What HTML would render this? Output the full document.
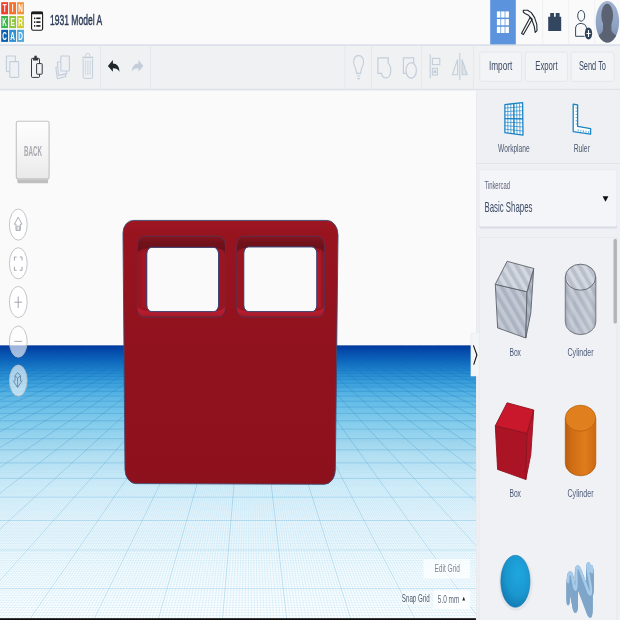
<!DOCTYPE html>
<html><head><meta charset="utf-8"><title>1931 Model A</title>
<style>
html,body{margin:0;padding:0;background:#fafafa;}
body{width:620px;height:620px;overflow:hidden;position:relative;font-family:"Liberation Sans",sans-serif;}
</style></head><body>
<svg width="620" height="620" viewBox="0 0 620 620" font-family="Liberation Sans, sans-serif" style="position:absolute;left:0;top:0;display:block;will-change:transform">
<rect x="0" y="0" width="620" height="620" fill="#fafafa"/>
<defs>
<linearGradient id="gnd" x1="0" y1="345" x2="0" y2="620" gradientUnits="userSpaceOnUse">
<stop offset="0.0000" stop-color="#002e98"/>
<stop offset="0.0109" stop-color="#003ca4"/>
<stop offset="0.0255" stop-color="#044cae"/>
<stop offset="0.0509" stop-color="#0a62bc"/>
<stop offset="0.0873" stop-color="#1a7fcc"/>
<stop offset="0.1225" stop-color="#3098d8"/>
<stop offset="0.1564" stop-color="#4aace2"/>
<stop offset="0.1927" stop-color="#64bce8"/>
<stop offset="0.2364" stop-color="#78c7eb"/>
<stop offset="0.2909" stop-color="#92d3ef"/>
<stop offset="0.3455" stop-color="#aadcf2"/>
<stop offset="0.4000" stop-color="#c2e7f6"/>
<stop offset="0.4727" stop-color="#d8f0fa"/>
<stop offset="0.5491" stop-color="#e8f7fd"/>
<stop offset="0.6400" stop-color="#f2fafe"/>
<stop offset="0.8000" stop-color="#fbfeff"/>
<stop offset="1.0000" stop-color="#ffffff"/>
</linearGradient>
<linearGradient id="fmin" x1="0" y1="360" x2="0" y2="560" gradientUnits="userSpaceOnUse"><stop offset="0" stop-color="#3fa0d8" stop-opacity="0"/><stop offset="0.28" stop-color="#4fb0e0" stop-opacity="0.2"/><stop offset="0.32" stop-color="#4fb0e0" stop-opacity="0.13"/><stop offset="1" stop-color="#5dbbe4" stop-opacity="0.3"/></linearGradient>
<linearGradient id="fmaj" x1="0" y1="345" x2="0" y2="620" gradientUnits="userSpaceOnUse"><stop offset="0" stop-color="#0c4f9e" stop-opacity="0.25"/><stop offset="0.15" stop-color="#1f7cc0" stop-opacity="0.5"/><stop offset="0.5" stop-color="#3f9fd0" stop-opacity="0.48"/><stop offset="1" stop-color="#57aed8" stop-opacity="0.48"/></linearGradient>
<clipPath id="gclip"><rect x="0" y="345.4" width="476" height="273"/></clipPath>
</defs>
<rect x="0" y="345.4" width="476" height="273" fill="url(#gnd)"/>
<g clip-path="url(#gclip)" fill="none">
<path d="M2.6 362.0L-2.0 363.1M3.8 362.0L-2.0 363.5M5.1 362.0L-2.0 363.8M6.3 362.0L-2.0 364.1M8.8 362.0L-2.0 364.8M10.1 362.0L-2.0 365.1M11.3 362.0L-2.0 365.5M12.6 362.0L-2.0 365.8M13.8 362.0L-2.0 366.2M15.1 362.0L-2.0 366.5M16.3 362.0L-2.0 366.9M17.6 362.0L-2.0 367.2M18.8 362.0L-2.0 367.6M21.3 362.0L-2.0 368.3M22.5 362.0L-2.0 368.7M23.8 362.0L-2.0 369.1M25.0 362.0L-2.0 369.5M26.3 362.0L-2.0 369.8M27.5 362.0L-2.0 370.2M28.8 362.0L-2.0 370.6M30.0 362.0L-2.0 371.0M31.3 362.0L-2.0 371.4M33.8 362.0L-2.0 372.3M35.0 362.0L-2.0 372.7M36.3 362.0L-2.0 373.1M37.5 362.0L-2.0 373.5M38.8 362.0L-2.0 374.0M40.0 362.0L-2.0 374.4M41.3 362.0L-2.0 374.9M42.5 362.0L-2.0 375.3M43.8 362.0L-2.0 375.8M46.3 362.0L-2.0 376.7M47.5 362.0L-2.0 377.2M48.8 362.0L-2.0 377.6M50.0 362.0L-2.0 378.1M51.2 362.0L-2.0 378.6M52.5 362.0L-2.0 379.1M53.7 362.0L-2.0 379.6M55.0 362.0L-2.0 380.1M56.2 362.0L-2.0 380.6M58.7 362.0L-2.0 381.7M60.0 362.0L-2.0 382.2M61.2 362.0L-2.0 382.8M62.5 362.0L-2.0 383.3M63.7 362.0L-2.0 383.9M65.0 362.0L-2.0 384.4M66.2 362.0L-2.0 385.0M67.5 362.0L-2.0 385.6M68.7 362.0L-2.0 386.2M71.2 362.0L-2.0 387.4M72.5 362.0L-2.0 388.0M73.7 362.0L-2.0 388.6M75.0 362.0L-2.0 389.3M76.2 362.0L-2.0 389.9M77.5 362.0L-2.0 390.5M78.7 362.0L-2.0 391.2M79.9 362.0L-2.0 391.9M81.2 362.0L-2.0 392.6M83.7 362.0L-2.0 393.9M84.9 362.0L-2.0 394.7M86.2 362.0L-2.0 395.4M87.4 362.0L-2.0 396.1M88.7 362.0L-2.0 396.9M89.9 362.0L-2.0 397.6M91.2 362.0L-2.0 398.4M92.4 362.0L-2.0 399.2M93.7 362.0L-2.0 399.9M96.2 362.0L-2.0 401.6M97.4 362.0L-2.0 402.4M98.7 362.0L-2.0 403.2M99.9 362.0L-2.0 404.1M101.2 362.0L-2.0 405.0M102.4 362.0L-2.0 405.9M103.7 362.0L-2.0 406.8M104.9 362.0L-2.0 407.7M106.2 362.0L-2.0 408.6M108.6 362.0L-2.0 410.5M109.9 362.0L-2.0 411.5M111.1 362.0L-2.0 412.5M112.4 362.0L-2.0 413.5M113.6 362.0L-2.0 414.6M114.9 362.0L-2.0 415.6M116.1 362.0L-2.0 416.7M117.4 362.0L-2.0 417.8M118.6 362.0L-2.0 418.9M121.1 362.0L-2.0 421.2M1.8 420.0L-2.0 421.8M122.4 362.0L-2.0 422.4M4.2 420.0L-2.0 423.0M123.6 362.0L-2.0 423.6M6.6 420.0L-2.0 424.2M124.9 362.0L-2.0 424.9M9.0 420.0L-2.0 425.5M126.1 362.0L-2.0 426.1M11.4 420.0L-2.0 426.8M127.4 362.0L-2.0 427.4M13.8 420.0L-2.0 428.1M128.6 362.0L-2.0 428.7M16.3 420.0L-2.0 429.4M129.9 362.0L-2.0 430.0M18.7 420.0L-2.0 430.7M131.1 362.0L-2.0 431.4M21.1 420.0L-2.0 432.1M23.5 420.0L-2.0 433.5M133.6 362.0L-2.0 434.2M25.9 420.0L-2.0 435.0M134.9 362.0L-2.0 435.7M28.3 420.0L-2.0 436.4M136.1 362.0L-2.0 437.2M30.8 420.0L-2.0 437.9M137.3 362.0L-2.0 438.7M33.2 420.0L-2.0 439.5M138.6 362.0L-2.0 440.2M35.6 420.0L-2.0 441.0M139.8 362.0L-2.0 441.8M38.0 420.0L-2.0 442.6M141.1 362.0L-2.0 443.5M40.4 420.0L-2.0 444.3M142.3 362.0L-2.0 445.1M42.8 420.0L-2.0 446.0M143.6 362.0L-2.0 446.8M45.2 420.0L-2.0 447.7M47.7 420.0L-2.0 449.5M146.1 362.0L-2.0 450.3M50.1 420.0L-2.0 451.3M147.3 362.0L-2.0 452.2M52.5 420.0L-2.0 453.1M148.6 362.0L-2.0 454.0M54.9 420.0L-2.0 455.0M149.8 362.0L-2.0 456.0M57.3 420.0L-2.0 456.9M151.1 362.0L-2.0 457.9M59.7 420.0L-2.0 458.9M152.3 362.0L-2.0 460.0M62.2 420.0L-2.0 461.0M153.6 362.0L-2.0 462.0M64.6 420.0L-2.0 463.1M154.8 362.0L-2.0 464.1M67.0 420.0L-2.0 465.2M156.1 362.0L-2.0 466.3M69.4 420.0L-2.0 467.4M71.8 420.0L-2.0 469.7M158.6 362.0L-2.0 470.9M74.2 420.0L-2.0 472.0M159.8 362.0L-2.0 473.2M76.6 420.0L-2.0 474.4M161.1 362.0L-2.0 475.7M79.1 420.0L-2.0 476.9M162.3 362.0L-2.0 478.2M81.5 420.0L-2.0 479.4M163.6 362.0L-2.0 480.7M83.9 420.0L-2.0 482.0M164.8 362.0L-2.0 483.4M86.3 420.0L-2.0 484.7M166.0 362.0L-2.0 486.1M88.7 420.0L-2.0 487.5M167.3 362.0L-2.0 488.9M91.1 420.0L-2.0 490.3M168.5 362.0L-2.0 491.8M93.5 420.0L-2.0 493.3M96.0 420.0L-2.0 496.3M171.0 362.0L-2.0 497.9M98.4 420.0L-2.0 499.4M172.3 362.0L-2.0 501.0M100.8 420.0L-2.0 502.7M173.5 362.0L-2.0 504.3M103.2 420.0L-2.0 506.0M174.8 362.0L-2.0 507.7M105.6 420.0L-2.0 509.5M176.0 362.0L-2.0 511.2M108.0 420.0L-2.0 513.0M177.3 362.0L-2.0 514.8M110.5 420.0L-2.0 516.7M178.5 362.0L-2.0 518.6M112.9 420.0L-2.0 520.5M179.8 362.0L-2.0 522.5M115.3 420.0L-2.0 524.5M181.0 362.0L-2.0 526.5M117.7 420.0L-2.0 528.6M120.1 420.0L-2.0 532.8M183.5 362.0L-2.0 535.0M122.5 420.0L-2.0 537.2M184.8 362.0L-2.0 539.5M124.9 420.0L-2.0 541.8M186.0 362.0L-2.0 544.2M127.4 420.0L-2.0 546.6M187.3 362.0L-2.0 549.0M129.8 420.0L-2.0 551.5M188.5 362.0L-2.0 554.1M132.2 420.0L-2.0 556.7M189.8 362.0L-2.0 559.3M134.6 420.0L-2.0 562.1M191.0 362.0L-2.0 564.8M137.0 420.0L-2.0 567.7M192.3 362.0L-2.0 570.5M139.4 420.0L-2.0 573.5M193.5 362.0L-2.0 576.5M141.8 420.0L-2.0 579.6M144.3 420.0L-2.0 586.0M196.0 362.0L-2.0 589.3M146.7 420.0L-2.0 592.7M197.2 362.0L-2.0 596.1M149.1 420.0L-2.0 599.7M198.5 362.0L-2.0 603.3M151.5 420.0L-2.0 607.0M199.7 362.0L-2.0 610.8M153.9 420.0L-2.0 614.8M201.0 362.0L-2.0 618.8M156.3 420.0L0.2 620.0M202.2 362.0L3.5 620.0M158.8 420.0L6.7 620.0M203.5 362.0L9.9 620.0M161.2 420.0L13.1 620.0M204.7 362.0L16.3 620.0M163.6 420.0L19.6 620.0M206.0 362.0L22.8 620.0M166.0 420.0L26.0 620.0M168.4 420.0L32.4 620.0M208.5 362.0L35.7 620.0M170.8 420.0L38.9 620.0M209.7 362.0L42.1 620.0M173.2 420.0L45.3 620.0M211.0 362.0L48.5 620.0M175.7 420.0L51.8 620.0M212.2 362.0L55.0 620.0M178.1 420.0L58.2 620.0M213.5 362.0L61.4 620.0M180.5 420.0L64.6 620.0M214.7 362.0L67.9 620.0M182.9 420.0L71.1 620.0M216.0 362.0L74.3 620.0M185.3 420.0L77.5 620.0M217.2 362.0L80.7 620.0M187.7 420.0L84.0 620.0M218.5 362.0L87.2 620.0M190.2 420.0L90.4 620.0M192.6 420.0L96.8 620.0M220.9 362.0L100.1 620.0M195.0 420.0L103.3 620.0M222.2 362.0L106.5 620.0M197.4 420.0L109.7 620.0M223.4 362.0L112.9 620.0M199.8 420.0L116.2 620.0M224.7 362.0L119.4 620.0M202.2 420.0L122.6 620.0M225.9 362.0L125.8 620.0M204.6 420.0L129.0 620.0M227.2 362.0L132.3 620.0M207.1 420.0L135.5 620.0M228.4 362.0L138.7 620.0M209.5 420.0L141.9 620.0M229.7 362.0L145.1 620.0M211.9 420.0L148.4 620.0M230.9 362.0L151.6 620.0M214.3 420.0L154.8 620.0M216.7 420.0L161.2 620.0M233.4 362.0L164.5 620.0M219.1 420.0L167.7 620.0M234.7 362.0L170.9 620.0M221.5 420.0L174.1 620.0M235.9 362.0L177.3 620.0M224.0 420.0L180.6 620.0M237.2 362.0L183.8 620.0M226.4 420.0L187.0 620.0M238.4 362.0L190.2 620.0M228.8 420.0L193.4 620.0M239.7 362.0L196.7 620.0M231.2 420.0L199.9 620.0M240.9 362.0L203.1 620.0M233.6 420.0L206.3 620.0M242.2 362.0L209.5 620.0M236.0 420.0L212.8 620.0M243.4 362.0L216.0 620.0M238.5 420.0L219.2 620.0M240.9 420.0L225.6 620.0M245.9 362.0L228.9 620.0M243.3 420.0L232.1 620.0M247.2 362.0L235.3 620.0M245.7 420.0L238.5 620.0M248.4 362.0L241.7 620.0M248.1 420.0L245.0 620.0M249.6 362.0L248.2 620.0M250.5 420.0L251.4 620.0M250.9 362.0L254.6 620.0M252.9 420.0L257.8 620.0M252.1 362.0L261.1 620.0M255.4 420.0L264.3 620.0M253.4 362.0L267.5 620.0M257.8 420.0L270.7 620.0M254.6 362.0L273.9 620.0M260.2 420.0L277.2 620.0M255.9 362.0L280.4 620.0M262.6 420.0L283.6 620.0M265.0 420.0L290.1 620.0M258.4 362.0L293.3 620.0M267.4 420.0L296.5 620.0M259.6 362.0L299.7 620.0M269.8 420.0L302.9 620.0M260.9 362.0L306.2 620.0M272.3 420.0L309.4 620.0M262.1 362.0L312.6 620.0M274.7 420.0L315.8 620.0M263.4 362.0L319.0 620.0M277.1 420.0L322.3 620.0M264.6 362.0L325.5 620.0M279.5 420.0L328.7 620.0M265.9 362.0L331.9 620.0M281.9 420.0L335.1 620.0M267.1 362.0L338.4 620.0M284.3 420.0L341.6 620.0M268.4 362.0L344.8 620.0M286.8 420.0L348.0 620.0M289.2 420.0L354.5 620.0M270.9 362.0L357.7 620.0M291.6 420.0L360.9 620.0M272.1 362.0L364.1 620.0M294.0 420.0L367.3 620.0M273.4 362.0L370.6 620.0M296.4 420.0L373.8 620.0M274.6 362.0L377.0 620.0M298.8 420.0L380.2 620.0M275.9 362.0L383.4 620.0M301.2 420.0L386.7 620.0M277.1 362.0L389.9 620.0M303.7 420.0L393.1 620.0M278.3 362.0L396.3 620.0M306.1 420.0L399.5 620.0M279.6 362.0L402.8 620.0M308.5 420.0L406.0 620.0M280.8 362.0L409.2 620.0M310.9 420.0L412.4 620.0M313.3 420.0L418.9 620.0M283.3 362.0L422.1 620.0M315.7 420.0L425.3 620.0M284.6 362.0L428.5 620.0M318.2 420.0L431.7 620.0M285.8 362.0L435.0 620.0M320.6 420.0L438.2 620.0M287.1 362.0L441.4 620.0M323.0 420.0L444.6 620.0M288.3 362.0L447.8 620.0M325.4 420.0L451.1 620.0M289.6 362.0L454.3 620.0M327.8 420.0L457.5 620.0M290.8 362.0L460.7 620.0M330.2 420.0L463.9 620.0M292.1 362.0L467.2 620.0M332.6 420.0L470.4 620.0M293.3 362.0L473.6 620.0M335.1 420.0L476.8 620.0M337.5 420.0L478.0 612.8M295.8 362.0L478.0 608.5M339.9 420.0L478.0 604.4M297.1 362.0L478.0 600.3M342.3 420.0L478.0 596.4M298.3 362.0L478.0 592.6M344.7 420.0L478.0 588.9M299.6 362.0L478.0 585.2M347.1 420.0L478.0 581.7M300.8 362.0L478.0 578.2M349.5 420.0L478.0 574.8M302.1 362.0L478.0 571.6M352.0 420.0L478.0 568.3M303.3 362.0L478.0 565.2M354.4 420.0L478.0 562.1M304.6 362.0L478.0 559.1M356.8 420.0L478.0 556.2M305.8 362.0L478.0 553.3M359.2 420.0L478.0 550.5M361.6 420.0L478.0 545.1M308.3 362.0L478.0 542.5M364.0 420.0L478.0 539.9M309.5 362.0L478.0 537.4M366.5 420.0L478.0 534.9M310.8 362.0L478.0 532.5M368.9 420.0L478.0 530.2M312.0 362.0L478.0 527.9M371.3 420.0L478.0 525.6M313.3 362.0L478.0 523.4M373.7 420.0L478.0 521.2M314.5 362.0L478.0 519.0M376.1 420.0L478.0 516.9M315.8 362.0L478.0 514.9M378.5 420.0L478.0 512.9M317.0 362.0L478.0 510.9M380.9 420.0L478.0 508.9M318.3 362.0L478.0 507.0M383.4 420.0L478.0 505.2M385.8 420.0L478.0 501.5M320.8 362.0L478.0 499.7M388.2 420.0L478.0 498.0M322.0 362.0L478.0 496.3M390.6 420.0L478.0 494.6M323.3 362.0L478.0 492.9M393.0 420.0L478.0 491.3M324.5 362.0L478.0 489.7M395.4 420.0L478.0 488.1M325.8 362.0L478.0 486.6M397.8 420.0L478.0 485.1M327.0 362.0L478.0 483.6M400.3 420.0L478.0 482.1M328.3 362.0L478.0 480.6M402.7 420.0L478.0 479.2M329.5 362.0L478.0 477.8M405.1 420.0L478.0 476.4M330.8 362.0L478.0 475.0M407.5 420.0L478.0 473.7M409.9 420.0L478.0 471.1M333.3 362.0L478.0 469.8M412.3 420.0L478.0 468.5M334.5 362.0L478.0 467.3M414.8 420.0L478.0 466.1M335.7 362.0L478.0 464.9M417.2 420.0L478.0 463.7M337.0 362.0L478.0 462.5M419.6 420.0L478.0 461.3M338.2 362.0L478.0 460.2M422.0 420.0L478.0 459.1M339.5 362.0L478.0 458.0M424.4 420.0L478.0 456.9M340.7 362.0L478.0 455.8M426.8 420.0L478.0 454.7M342.0 362.0L478.0 453.7M429.2 420.0L478.0 452.6M343.2 362.0L478.0 451.6M431.7 420.0L478.0 450.6M434.1 420.0L478.0 448.6M345.7 362.0L478.0 447.7M436.5 420.0L478.0 446.7M347.0 362.0L478.0 445.8M438.9 420.0L478.0 444.8M348.2 362.0L478.0 443.9M441.3 420.0L478.0 443.0M349.5 362.0L478.0 442.1M443.7 420.0L478.0 441.2M350.7 362.0L478.0 440.3M446.2 420.0L478.0 439.5M352.0 362.0L478.0 438.6M448.6 420.0L478.0 437.8M353.2 362.0L478.0 437.0M451.0 420.0L478.0 436.1M354.5 362.0L478.0 435.3M453.4 420.0L478.0 434.5M355.7 362.0L478.0 433.7M455.8 420.0L478.0 432.9M458.2 420.0L478.0 431.4M358.2 362.0L478.0 430.6M460.6 420.0L478.0 429.9M359.5 362.0L478.0 429.1M463.1 420.0L478.0 428.4M360.7 362.0L478.0 427.7M465.5 420.0L478.0 427.0M362.0 362.0L478.0 426.3M467.9 420.0L478.0 425.6M363.2 362.0L478.0 424.9M470.3 420.0L478.0 424.2M364.4 362.0L478.0 423.5M472.7 420.0L478.0 422.8M365.7 362.0L478.0 422.2M475.1 420.0L478.0 421.5M366.9 362.0L478.0 420.9M368.2 362.0L478.0 419.6M370.7 362.0L478.0 417.1M371.9 362.0L478.0 415.9M373.2 362.0L478.0 414.8M374.4 362.0L478.0 413.6M375.7 362.0L478.0 412.5M376.9 362.0L478.0 411.4M378.2 362.0L478.0 410.3M379.4 362.0L478.0 409.2M380.7 362.0L478.0 408.2M383.2 362.0L478.0 406.2M384.4 362.0L478.0 405.2M385.7 362.0L478.0 404.2M386.9 362.0L478.0 403.3M388.2 362.0L478.0 402.3M389.4 362.0L478.0 401.4M390.7 362.0L478.0 400.5M391.9 362.0L478.0 399.6M393.1 362.0L478.0 398.8M395.6 362.0L478.0 397.1M396.9 362.0L478.0 396.2M398.1 362.0L478.0 395.4M399.4 362.0L478.0 394.6M400.6 362.0L478.0 393.8M401.9 362.0L478.0 393.1M403.1 362.0L478.0 392.3M404.4 362.0L478.0 391.6M405.6 362.0L478.0 390.8M408.1 362.0L478.0 389.4M409.4 362.0L478.0 388.7M410.6 362.0L478.0 388.0M411.9 362.0L478.0 387.3M413.1 362.0L478.0 386.7M414.4 362.0L478.0 386.0M415.6 362.0L478.0 385.4M416.9 362.0L478.0 384.7M418.1 362.0L478.0 384.1M420.6 362.0L478.0 382.9M421.8 362.0L478.0 382.3M423.1 362.0L478.0 381.7M424.3 362.0L478.0 381.1M425.6 362.0L478.0 380.5M426.8 362.0L478.0 379.9M428.1 362.0L478.0 379.4M429.3 362.0L478.0 378.8M430.6 362.0L478.0 378.3M433.1 362.0L478.0 377.2M434.3 362.0L478.0 376.7M435.6 362.0L478.0 376.2M436.8 362.0L478.0 375.7M438.1 362.0L478.0 375.2M439.3 362.0L478.0 374.7M440.6 362.0L478.0 374.2M441.8 362.0L478.0 373.7M443.1 362.0L478.0 373.2M445.6 362.0L478.0 372.3M446.8 362.0L478.0 371.8M448.0 362.0L478.0 371.4M449.3 362.0L478.0 370.9M450.5 362.0L478.0 370.5M451.8 362.0L478.0 370.1M453.0 362.0L478.0 369.6M454.3 362.0L478.0 369.2M455.5 362.0L478.0 368.8M458.0 362.0L478.0 368.0M459.3 362.0L478.0 367.5M460.5 362.0L478.0 367.1M461.8 362.0L478.0 366.8M463.0 362.0L478.0 366.4M464.3 362.0L478.0 366.0M465.5 362.0L478.0 365.6M466.8 362.0L478.0 365.2M468.0 362.0L478.0 364.8M470.5 362.0L478.0 364.1M471.8 362.0L478.0 363.7M473.0 362.0L478.0 363.4M474.3 362.0L478.0 363.0" stroke="url(#fmin)" stroke-width="0.5"/>
<path d="M0 372.2H476M0 372.5H476M0 372.8H476M0 373.1H476M0 373.7H476M0 373.9H476M0 374.2H476M0 374.5H476M0 374.8H476M0 375.1H476M0 375.4H476M0 375.7H476M0 376.1H476M0 376.7H476M0 377.0H476M0 377.3H476M0 377.6H476M0 378.0H476M0 378.3H476M0 378.6H476M0 378.9H476M0 379.3H476M0 380.0H476M0 380.3H476M0 380.6H476M0 381.0H476M0 381.4H476M0 381.7H476M0 382.1H476M0 382.4H476M0 382.8H476M0 383.5H476M0 383.9H476M0 384.3H476M0 384.7H476M0 385.1H476M0 385.4H476M0 385.8H476M0 386.2H476M0 386.6H476M0 387.4H476M0 387.9H476M0 388.3H476M0 388.7H476M0 389.1H476M0 389.5H476M0 390.0H476M0 390.4H476M0 390.8H476M0 391.7H476M0 392.2H476M0 392.6H476M0 393.1H476M0 393.6H476M0 394.0H476M0 394.5H476M0 395.0H476" stroke="#58b8e2" stroke-width="0.5" opacity="0.07"/>
<path d="M0 395.5H476M0 396.5H476M0 397.0H476M0 397.5H476M0 398.0H476M0 398.5H476M0 399.0H476M0 399.5H476M0 400.1H476M0 400.6H476M0 401.7H476M0 402.3H476M0 402.8H476M0 403.4H476M0 404.0H476M0 404.6H476M0 405.1H476M0 405.7H476M0 406.3H476M0 407.6H476M0 408.2H476M0 408.8H476M0 409.5H476M0 410.1H476M0 410.8H476M0 411.4H476M0 412.1H476M0 412.8H476M0 414.1H476M0 414.8H476M0 415.5H476M0 416.3H476M0 417.0H476M0 417.7H476M0 418.5H476M0 419.2H476M0 420.0H476" stroke="#58b8e2" stroke-width="0.5" opacity="0.14"/>
<path d="M0 421.6H476M0 422.4H476M0 423.2H476M0 424.0H476M0 424.8H476M0 425.6H476M0 426.5H476M0 427.4H476M0 428.2H476M0 430.0H476M0 430.9H476M0 431.8H476M0 432.8H476M0 433.7H476M0 434.7H476M0 435.7H476M0 436.7H476M0 437.7H476M0 439.7H476" stroke="#58b8e2" stroke-width="0.5" opacity="0.18"/>
<path d="M0 440.3H476M0 440.8H476M0 441.3H476M0 441.9H476M0 442.4H476M0 442.9H476M0 443.5H476M0 444.0H476M0 444.6H476M0 445.2H476M0 445.7H476M0 446.3H476M0 446.9H476M0 447.4H476M0 448.0H476M0 448.6H476M0 449.2H476M0 450.4H476M0 451.0H476M0 451.6H476M0 452.3H476M0 452.9H476M0 453.5H476M0 454.1H476M0 454.8H476M0 455.4H476M0 456.1H476M0 456.7H476M0 457.4H476M0 458.0H476M0 458.7H476M0 459.4H476" stroke="#58b8e2" stroke-width="0.5" opacity="0.12"/>
<path d="M0 460.1H476M0 460.8H476M0 461.5H476M0 462.2H476M0 463.6H476M0 464.3H476M0 465.0H476M0 465.8H476M0 466.5H476M0 467.2H476M0 468.0H476M0 468.7H476M0 469.5H476M0 470.3H476M0 471.1H476M0 471.9H476M0 472.6H476M0 473.4H476M0 474.3H476M0 475.1H476M0 475.9H476M0 476.7H476M0 477.6H476M0 479.3H476M0 480.1H476M0 481.0H476M0 481.9H476M0 482.8H476M0 483.7H476M0 484.6H476M0 485.5H476M0 486.4H476M0 487.4H476M0 488.3H476M0 489.3H476" stroke="#58b8e2" stroke-width="0.5" opacity="0.17"/>
<path d="M0 490.2H476M0 491.2H476M0 492.2H476M0 493.2H476M0 494.2H476M0 495.2H476M0 496.2H476M0 498.3H476M0 499.3H476M0 500.4H476M0 501.5H476M0 502.6H476M0 503.7H476M0 504.8H476M0 505.9H476M0 507.1H476M0 508.2H476M0 509.4H476M0 510.6H476M0 511.8H476M0 513.0H476M0 514.2H476M0 515.4H476M0 516.7H476M0 517.9H476M0 519.2H476M0 521.8H476M0 523.1H476M0 524.5H476M0 525.8H476M0 527.2H476M0 528.6H476" stroke="#58b8e2" stroke-width="0.5" opacity="0.22"/>
<path d="M0 530.0H476M0 531.4H476M0 532.9H476M0 534.3H476M0 535.8H476M0 537.3H476M0 538.8H476M0 540.4H476M0 541.9H476M0 543.5H476M0 545.1H476M0 546.7H476M0 548.3H476M0 551.7H476M0 553.4H476M0 555.1H476M0 556.9H476M0 558.6H476M0 560.5H476M0 562.3H476M0 564.1H476M0 566.0H476M0 567.9H476M0 569.9H476M0 571.8H476M0 573.8H476M0 575.8H476M0 577.9H476M0 580.0H476M0 582.1H476M0 584.2H476M0 586.4H476M0 590.8H476M0 593.1H476M0 595.4H476M0 597.8H476M0 600.2H476M0 602.6H476M0 605.1H476M0 607.6H476M0 610.1H476M0 612.7H476M0 615.4H476M0 618.1H476" stroke="#58b8e2" stroke-width="0.5" opacity="0.28"/>
<path d="M10.7 345.0L-2.0 347.4M19.7 345.0L-2.0 349.2M28.8 345.0L-2.0 351.3M37.8 345.0L-2.0 353.4M46.9 345.0L-2.0 355.8M55.9 345.0L-2.0 358.4M65.0 345.0L-2.0 361.3M74.0 345.0L-2.0 364.4M83.1 345.0L-2.0 367.9M92.2 345.0L-2.0 371.8M101.2 345.0L-2.0 376.2M110.3 345.0L-2.0 381.2M119.3 345.0L-2.0 386.8M128.4 345.0L-2.0 393.2M137.4 345.0L-2.0 400.7M146.5 345.0L-2.0 409.6M155.6 345.0L-2.0 420.1M164.6 345.0L-2.0 432.8M173.7 345.0L-2.0 448.6M182.7 345.0L-2.0 468.6M191.8 345.0L-2.0 494.8M200.8 345.0L-2.0 530.7M209.9 345.0L-2.0 582.8M219.0 345.0L29.2 620.0M228.0 345.0L93.6 620.0M237.1 345.0L158.0 620.0M246.1 345.0L222.4 620.0M255.2 345.0L286.8 620.0M264.2 345.0L351.2 620.0M273.3 345.0L415.6 620.0M282.3 345.0L478.0 617.2M291.4 345.0L478.0 547.8M300.5 345.0L478.0 503.3M309.5 345.0L478.0 472.4M318.6 345.0L478.0 449.6M327.6 345.0L478.0 432.2M336.7 345.0L478.0 418.4M345.7 345.0L478.0 407.2M354.8 345.0L478.0 397.9M363.9 345.0L478.0 390.1M372.9 345.0L478.0 383.5M382.0 345.0L478.0 377.7M391.0 345.0L478.0 372.8M400.1 345.0L478.0 368.4M409.1 345.0L478.0 364.5M418.2 345.0L478.0 361.0M427.3 345.0L478.0 357.9M436.3 345.0L478.0 355.1M445.4 345.0L478.0 352.5M454.4 345.0L478.0 350.2M463.5 345.0L478.0 348.1M472.5 345.0L478.0 346.1M0 345.1H476M0 346.2H476M0 347.3H476M0 348.6H476M0 349.9H476M0 351.2H476M0 352.7H476M0 354.2H476M0 355.8H476M0 357.6H476M0 359.4H476M0 361.3H476M0 363.4H476M0 365.6H476M0 368.0H476M0 370.6H476M0 373.4H476M0 376.4H476M0 379.6H476M0 383.2H476M0 387.0H476M0 391.3H476M0 396.0H476M0 401.2H476M0 407.0H476M0 413.4H476M0 420.8H476M0 429.1H476M0 438.7H476M0 449.8H476M0 462.9H476M0 478.4H476M0 497.2H476M0 520.5H476M0 550.0H476M0 588.6H476" stroke="url(#fmaj)" stroke-width="0.7"/>
</g>
<rect x="0" y="618.2" width="475.9" height="1.8" fill="#0c0c0c"/>
<defs>
<linearGradient id="redm" x1="0" y1="220" x2="0" y2="484" gradientUnits="userSpaceOnUse"><stop offset="0" stop-color="#a01623"/><stop offset="0.05" stop-color="#97141f"/><stop offset="0.5" stop-color="#90121e"/><stop offset="1" stop-color="#8d111d"/></linearGradient>
<linearGradient id="wtop" x1="0" y1="236" x2="0" y2="248" gradientUnits="userSpaceOnUse"><stop offset="0" stop-color="#86151f"/><stop offset="0.5" stop-color="#74121c"/><stop offset="1" stop-color="#6c1019"/></linearGradient>
<linearGradient id="wbot" x1="0" y1="311" x2="0" y2="317.4" gradientUnits="userSpaceOnUse"><stop offset="0" stop-color="#b81d2f"/><stop offset="0.6" stop-color="#ad1a2a"/><stop offset="1" stop-color="#9a1522"/></linearGradient>
</defs>
<path fill-rule="evenodd" fill="url(#redm)" stroke="#3f4b72" stroke-width="0.9" d="M133.5 220.4H327A11 14.5 0 0 1 338 235L335.3 470A11 14.3 0 0 1 324.3 484.3L136 483.6A11 14.3 0 0 1 125 469.4L123 233A10.5 12.6 0 0 1 133.5 220.4ZM151.7 247.3H213.6A5.0 6.5 0 0 1 218.6 253.8V305.2A5.0 6.5 0 0 1 213.6 311.7H151.7A5.0 6.5 0 0 1 146.7 305.2V253.8A5.0 6.5 0 0 1 151.7 247.3ZM248.7 246.8H311.9A5.0 6.5 0 0 1 316.9 253.3V305.2A5.0 6.5 0 0 1 311.9 311.7H248.7A5.0 6.5 0 0 1 243.7 305.2V253.3A5.0 6.5 0 0 1 248.7 246.8Z"/>
<defs><clipPath id="ring0"><path clip-rule="evenodd" d="M144.3 236.2H218.3A7 9 0 0 1 225.3 245.2V308.0A7 9 0 0 1 218.3 317.0H144.3A7 9 0 0 1 137.3 308.0V245.2A7 9 0 0 1 144.3 236.2ZM151.7 247.3H213.6A5 6.5 0 0 1 218.6 253.8V305.2A5 6.5 0 0 1 213.6 311.7H151.7A5 6.5 0 0 1 146.7 305.2V253.8A5 6.5 0 0 1 151.7 247.3Z"/></clipPath></defs>
<path fill-rule="evenodd" fill="#99151f" d="M144.3 236.2H218.3A7 9 0 0 1 225.3 245.2V308.0A7 9 0 0 1 218.3 317.0H144.3A7 9 0 0 1 137.3 308.0V245.2A7 9 0 0 1 144.3 236.2ZM151.7 247.3H213.6A5 6.5 0 0 1 218.6 253.8V305.2A5 6.5 0 0 1 213.6 311.7H151.7A5 6.5 0 0 1 146.7 305.2V253.8A5 6.5 0 0 1 151.7 247.3Z"/>
<g clip-path="url(#ring0)"><path fill="url(#wtop)" d="M137.3 236.2H225.3V254.3Q224.3 248.8 215.6 248.3H149.7Q138.3 248.8 137.3 254.3Z"/><path fill="url(#wbot)" d="M137.3 317.0H225.3V305.7Q224.3 310.7 215.6 311.09999999999997H149.7Q138.3 310.7 137.3 305.7Z"/><path d="M147.7 252.3V307.7H141.7V252.3Z" fill="#a41826" opacity="0.7"/></g>
<path fill="none" stroke="#443a62" stroke-width="0.8" opacity="0.9" d="M144.3 236.2H218.3A7 9 0 0 1 225.3 245.2V308.0A7 9 0 0 1 218.3 317.0H144.3A7 9 0 0 1 137.3 308.0V245.2A7 9 0 0 1 144.3 236.2Z"/>
<path fill="none" stroke="#38477a" stroke-width="0.9" d="M151.7 247.3H213.6A5 6.5 0 0 1 218.6 253.8V305.2A5 6.5 0 0 1 213.6 311.7H151.7A5 6.5 0 0 1 146.7 305.2V253.8A5 6.5 0 0 1 151.7 247.3Z"/>
<defs><clipPath id="ring1"><path clip-rule="evenodd" d="M243.8 236.2H317.4A7 9 0 0 1 324.4 245.2V308.0A7 9 0 0 1 317.4 317.0H243.8A7 9 0 0 1 236.8 308.0V245.2A7 9 0 0 1 243.8 236.2ZM248.7 246.8H311.9A5 6.5 0 0 1 316.9 253.3V305.2A5 6.5 0 0 1 311.9 311.7H248.7A5 6.5 0 0 1 243.7 305.2V253.3A5 6.5 0 0 1 248.7 246.8Z"/></clipPath></defs>
<path fill-rule="evenodd" fill="#99151f" d="M243.8 236.2H317.4A7 9 0 0 1 324.4 245.2V308.0A7 9 0 0 1 317.4 317.0H243.8A7 9 0 0 1 236.8 308.0V245.2A7 9 0 0 1 243.8 236.2ZM248.7 246.8H311.9A5 6.5 0 0 1 316.9 253.3V305.2A5 6.5 0 0 1 311.9 311.7H248.7A5 6.5 0 0 1 243.7 305.2V253.3A5 6.5 0 0 1 248.7 246.8Z"/>
<g clip-path="url(#ring1)"><path fill="url(#wtop)" d="M236.8 236.2H324.4V253.8Q323.4 248.3 313.9 247.8H246.7Q237.8 248.3 236.8 253.8Z"/><path fill="url(#wbot)" d="M236.8 317.0H324.4V305.7Q323.4 310.7 313.9 311.09999999999997H246.7Q237.8 310.7 236.8 305.7Z"/><path d="M315.9 251.8V307.7H320.9V251.8Z" fill="#b01b2c" opacity="0.8"/></g>
<path fill="none" stroke="#443a62" stroke-width="0.8" opacity="0.9" d="M243.8 236.2H317.4A7 9 0 0 1 324.4 245.2V308.0A7 9 0 0 1 317.4 317.0H243.8A7 9 0 0 1 236.8 308.0V245.2A7 9 0 0 1 243.8 236.2Z"/>
<path fill="none" stroke="#38477a" stroke-width="0.9" d="M248.7 246.8H311.9A5 6.5 0 0 1 316.9 253.3V305.2A5 6.5 0 0 1 311.9 311.7H248.7A5 6.5 0 0 1 243.7 305.2V253.3A5 6.5 0 0 1 248.7 246.8Z"/>
<defs><linearGradient id="cube" x1="0" y1="0" x2="0" y2="1">
<stop offset="0" stop-color="#fefefe"/><stop offset="0.55" stop-color="#f4f4f4"/><stop offset="1" stop-color="#e9e9e9"/></linearGradient></defs>
<path d="M17 179.2H48.4L47.8 183.2H17.7Z" fill="#bfbfbf"/>
<rect x="16.3" y="121.2" width="32.8" height="57.6" rx="1.3" ry="2" fill="url(#cube)" stroke="#c2c2c4" stroke-width="1.1"/>
<text transform="translate(23.90,155.60) scale(0.4154,1)" font-size="15" fill="#a9a9b1" font-weight="bold" >BACK</text>
<ellipse cx="18.3" cy="224.6" rx="8.9" ry="15.6" fill="#ffffff" fill-opacity="0.9" stroke="#b4b7be" stroke-width="0.8"/>
<path d="M18.2 217.2L22 224.2H20.4V230.4H16V224.2H14.4Z" fill="none" stroke="#9a9ca4" stroke-width="0.8" stroke-linejoin="round"/>
<path d="M17 230.2V226.2H19.4V230.2" fill="none" stroke="#9a9ca4" stroke-width="0.7"/>
<ellipse cx="18.3" cy="263.3" rx="8.9" ry="15.6" fill="#ffffff" fill-opacity="0.9" stroke="#b4b7be" stroke-width="0.8"/>
<path d="M14.4 260.5V257H16.6M19.8 257H22V260.5M22 266.8V270.3H19.8M16.6 270.3H14.4V266.8" fill="none" stroke="#9a9ca4" stroke-width="0.9"/>
<ellipse cx="18.3" cy="302.0" rx="8.9" ry="15.6" fill="#ffffff" fill-opacity="0.9" stroke="#b4b7be" stroke-width="0.8"/>
<path d="M14.4 302.2H22M18.2 296.5V308" fill="none" stroke="#9a9ca4" stroke-width="0.9"/>
<ellipse cx="18.3" cy="341.6" rx="8.9" ry="15.6" fill="#ffffff" fill-opacity="0.62" stroke="#b4b7be" stroke-width="0.8"/>
<path d="M14.4 341.4H22" fill="none" stroke="#9a9ca4" stroke-width="0.9"/>
<ellipse cx="18.3" cy="380.6" rx="8.9" ry="15.6" fill="#ffffff" fill-opacity="0.62" stroke="#b4b7be" stroke-width="0.8"/>
<path d="M17.6 372.6L20.5 375.8L17.6 378.1L15 375.8ZM15 375.8V381.3M20.5 375.8V381.3M17.6 378.1V387.2M13.1 380.6L17.6 387.4L22.4 380.3" fill="none" stroke="#5d7a97" stroke-width="0.8" stroke-linejoin="round"/>
<rect x="423.5" y="558.9" width="46.5" height="19.5" rx="1.5" fill="#ffffff" fill-opacity="0.72"/>
<text transform="translate(434.45,571.70) scale(0.5959,1)" font-size="11" fill="#7d8796" >Edit Grid</text>
<rect x="402" y="591" width="28.5" height="14" fill="#ffffff" fill-opacity="0.45"/>
<text transform="translate(401.80,602.20) scale(0.5654,1)" font-size="11" fill="#4d586a" >Snap Grid</text>
<rect x="433.3" y="590.3" width="37" height="18.6" rx="1.5" fill="#ffffff" fill-opacity="0.85"/>
<text transform="translate(437.80,603.40) scale(0.5863,1)" font-size="11" fill="#5d6878" >5.0 mm</text>
<path d="M462.3 600.6L465.1 600.6L463.7 596.8Z" fill="#222"/>
<rect x="0" y="0" width="620" height="44.6" fill="#fafafa"/>
<rect x="0" y="44.2" width="620" height="1.8" fill="#dde1e9"/>
<rect x="1.2" y="2.2" width="6.85" height="12.1" fill="#f0402a"/>
<text transform="translate(2.70,12.30) scale(0.5500,1)" font-size="11.6" fill="#ffffff" font-weight="bold" >T</text>
<rect x="9.2" y="2.2" width="6.85" height="12.1" fill="#f5702a"/>
<text transform="translate(11.71,12.30) scale(0.5500,1)" font-size="11.6" fill="#ffffff" font-weight="bold" >I</text>
<rect x="17.1" y="2.2" width="6.85" height="12.1" fill="#f5923a"/>
<text transform="translate(18.25,12.30) scale(0.5500,1)" font-size="11.6" fill="#ffffff" font-weight="bold" >N</text>
<rect x="1.2" y="16.0" width="6.85" height="12.1" fill="#3db54a"/>
<text transform="translate(2.35,26.10) scale(0.5500,1)" font-size="11.6" fill="#ffffff" font-weight="bold" >K</text>
<rect x="9.2" y="16.0" width="6.85" height="12.1" fill="#8cc63f"/>
<text transform="translate(10.47,26.10) scale(0.5500,1)" font-size="11.6" fill="#ffffff" font-weight="bold" >E</text>
<rect x="17.1" y="16.0" width="6.85" height="12.1" fill="#c9cc30"/>
<text transform="translate(18.25,26.10) scale(0.5500,1)" font-size="11.6" fill="#ffffff" font-weight="bold" >R</text>
<rect x="1.2" y="29.8" width="6.85" height="12.1" fill="#0e5fae"/>
<text transform="translate(2.35,39.90) scale(0.5500,1)" font-size="11.6" fill="#ffffff" font-weight="bold" >C</text>
<rect x="9.2" y="29.8" width="6.85" height="12.1" fill="#2f8fd0"/>
<text transform="translate(10.30,39.90) scale(0.5500,1)" font-size="11.6" fill="#ffffff" font-weight="bold" >A</text>
<rect x="17.1" y="29.8" width="6.85" height="12.1" fill="#4fa8dc"/>
<text transform="translate(18.25,39.90) scale(0.5500,1)" font-size="11.6" fill="#ffffff" font-weight="bold" >D</text>
<rect x="31.6" y="12.4" width="11" height="17.8" rx="1.2" ry="1.6" fill="#fdfdfd" stroke="#1b1b1b" stroke-width="1.1"/>
<rect x="31.3" y="11.6" width="11.6" height="2.6" rx="0.8" fill="#1b1b1b"/>
<rect x="34" y="17.5" width="1.3" height="1.6" fill="#1b1b1b"/><rect x="36.3" y="17.5" width="4.2" height="1.6" fill="#1b1b1b"/>
<rect x="34" y="21.3" width="1.3" height="1.6" fill="#1b1b1b"/><rect x="36.3" y="21.3" width="4.2" height="1.6" fill="#1b1b1b"/>
<rect x="34" y="25.1" width="1.3" height="1.6" fill="#1b1b1b"/><rect x="36.3" y="25.1" width="4.2" height="1.6" fill="#1b1b1b"/>
<text transform="translate(50.00,24.80) scale(0.5616,1)" font-size="15.2" fill="#2b3c58" stroke="#2b3c58" stroke-width="0.45">1931 Model A</text>
<rect x="490.2" y="0" width="25.6" height="44.4" fill="#5b93dc"/>
<rect x="496.90" y="11.40" width="3.5" height="6.2" fill="#ffffff"/>
<rect x="501.15" y="11.40" width="3.5" height="6.2" fill="#ffffff"/>
<rect x="505.40" y="11.40" width="3.5" height="6.2" fill="#ffffff"/>
<rect x="496.90" y="19.10" width="3.5" height="6.2" fill="#ffffff"/>
<rect x="501.15" y="19.10" width="3.5" height="6.2" fill="#ffffff"/>
<rect x="505.40" y="19.10" width="3.5" height="6.2" fill="#ffffff"/>
<rect x="496.90" y="26.80" width="3.5" height="6.2" fill="#ffffff"/>
<rect x="501.15" y="26.80" width="3.5" height="6.2" fill="#ffffff"/>
<rect x="505.40" y="26.80" width="3.5" height="6.2" fill="#ffffff"/>
<rect x="542.4" y="0" width="0.7" height="44" fill="#ebedf1"/>
<rect x="568.4" y="0" width="0.7" height="44" fill="#ebedf1"/>
<rect x="594.5" y="0" width="0.7" height="44" fill="#ebedf1"/>
<g fill="none" stroke="#1e2730" stroke-width="1.1" stroke-linejoin="round"><path d="M523.3 10.2H527.6L531.3 12.6L534.6 17.6L536.8 24.4L537 30.6L535.2 32.4L534.2 26.2L532 20.2L528.6 15.2L524.8 13.4L523.3 12Z"/><path d="M530.2 17.2L532.2 19.2L523.4 34.6L521.6 33.2Z"/></g>
<path d="M548.2 16.8H550.2V12.9H554V16.8H555.7V12.9H559.6V16.8H561.2V31H548.2Z" fill="#33465f"/>
<g fill="none" stroke="#33465f" stroke-width="1"><ellipse cx="581.2" cy="15.8" rx="3.5" ry="5.4"/><path d="M586.4 29V27.2Q585.6 23.6 581.2 23.4Q576 23.6 575.6 28V36.3H584.6"/></g>
<ellipse cx="588.5" cy="33.5" rx="3.7" ry="6" fill="#2f435d"/><path d="M586.4 33.5H590.6M588.5 30V37" stroke="#fff" stroke-width="1.1" fill="none"/>
<defs><linearGradient id="av" x1="0" y1="0" x2="0" y2="1"><stop offset="0" stop-color="#9fb1cf"/><stop offset="0.6" stop-color="#90a3c3"/><stop offset="1" stop-color="#6f83a6"/></linearGradient>
<clipPath id="avc"><ellipse cx="607.4" cy="21.8" rx="11.7" ry="20.8"/></clipPath></defs>
<ellipse cx="607.4" cy="21.8" rx="11.7" ry="20.8" fill="url(#av)"/>
<g clip-path="url(#avc)" fill="#5b6373"><ellipse cx="607.2" cy="15.4" rx="5.9" ry="11.6"/><path d="M603 22H611.4V29.5Q611.6 32.5 615.5 35Q619.5 37.5 620 44H594.5Q595 37.5 599 35Q602.8 32.5 603 29.5Z"/></g>
<rect x="0" y="46" width="620" height="43" fill="#f0f1f3"/>
<rect x="0" y="88.8" width="620" height="1.6" fill="#dfe2e8"/>
<rect x="100.05000000000001" y="46" width="0.7" height="43" fill="#e0e3e9"/>
<rect x="150.25" y="46" width="0.7" height="43" fill="#e0e3e9"/>
<rect x="344.65" y="46" width="0.7" height="43" fill="#e0e3e9"/>
<rect x="371.25" y="46" width="0.7" height="43" fill="#e0e3e9"/>
<rect x="421.34999999999997" y="46" width="0.7" height="43" fill="#e0e3e9"/>
<rect x="472.95" y="46" width="0.7" height="43" fill="#e0e3e9"/>
<g fill="#eef0f4" stroke="#c3cedb" stroke-width="1.1"><rect x="6.4" y="56" width="9" height="15.6" rx="0.6"/><rect x="9.8" y="61.6" width="8.8" height="15.8" rx="0.6"/></g>
<g fill="#f1f2f5" stroke="#33383d" stroke-width="1"><rect x="31.5" y="58.4" width="8" height="19" rx="0.8"/><path d="M33.2 60.2V58.2L34.7 57.6V55.9H36.5V57.6L38 58.2V60.2Z" fill="#33383d" stroke-width="0.5"/><rect x="36.6" y="63.6" width="5.6" height="10.6" rx="0.6"/></g>
<g fill="#eef0f4" stroke="#c3cedb" stroke-width="1.1" stroke-linejoin="round"><path d="M55.8 67.4L62.6 65L66 76.4L57.4 78.8Z"/><path d="M57.4 62.2L65.2 61.2L66.8 73.6L58.4 75.4Z"/><rect x="60.8" y="56" width="8.6" height="15" rx="0.6"/></g>
<g fill="none" stroke="#c3cedb"><path d="M85.8 56.6V54.4Q85.8 53.6 86.6 53.6H88.8Q89.6 53.6 89.6 54.4V56.6" stroke-width="0.9"/><path d="M82.2 57.4H93.4" stroke-width="1.5"/><path d="M83.2 59V77Q83.2 78.4 84.6 78.4H91.2Q92.6 78.4 92.6 77V59" stroke-width="1" fill="#eef0f4"/><path d="M85.6 60.4V75M87.9 60.4V75M90.2 60.4V75" stroke-width="0.7"/></g>
<path transform="translate(107.9,60.1)" d="M0 5.8L5 0V3.4Q11.4 3.6 11.6 11.6Q9.4 8 5 8.2V11.6Z" fill="#20272c"/>
<path transform="translate(143.4,60.1) scale(-1,1)" d="M0 5.8L5 0V3.4Q11.4 3.6 11.6 11.6Q9.4 8 5 8.2V11.6Z" fill="#c3cedb"/>
<g fill="none" stroke="#c3cedb" stroke-width="1.1"><path d="M356.6 73.4Q356.4 70 355 67Q353.4 63.4 353.7 61Q354.4 55.6 358.6 55.6Q362.8 55.6 363.5 61Q363.8 63.4 362.2 67Q360.8 70 360.6 73.4Z"/><path d="M356.8 76H360.4M357.2 78.6H360" /></g>
<path d="M377.9 57.8H388.2V63.4Q391 66 390.8 70.8Q390.4 77.8 386 78Q382.4 78 381.4 73.4H377.9Z" fill="none" stroke="#c3cedb" stroke-width="1.2"/>
<g fill="none" stroke="#c3cedb" stroke-width="1.2"><rect x="403.4" y="57.8" width="10.2" height="15.6"/><ellipse cx="411.2" cy="70.4" rx="5.2" ry="7.8" fill="#f0f1f3"/></g>
<g fill="none" stroke="#c3cedb" stroke-width="1.1"><path d="M430.2 54.2V78.4"/><rect x="432.4" y="58.4" width="7.4" height="6.2"/><rect x="432.4" y="68.4" width="5" height="6.6"/><rect x="433.6" y="70.2" width="2.6" height="3" fill="#c3cedb" stroke="none"/></g>
<g fill="none" stroke="#c3cedb" stroke-width="1.1"><path d="M459.8 53V80"/><path d="M457.6 59.4V74.8H452.4Z"/><path d="M462 59.4V74.8H467.2Z" fill="#dbe2ea"/></g>
<rect x="479.7" y="52.2" width="41.8" height="29.2" rx="1.6" ry="2.4" fill="#f3f4f6" stroke="#e2e5ea" stroke-width="0.8"/>
<text transform="translate(488.90,70.20) scale(0.6352,1)" font-size="13" fill="#3d4c65" >Import</text>
<rect x="525.3" y="52.2" width="42.2" height="29.2" rx="1.6" ry="2.4" fill="#f3f4f6" stroke="#e2e5ea" stroke-width="0.8"/>
<text transform="translate(535.30,70.20) scale(0.5936,1)" font-size="13" fill="#3d4c65" >Export</text>
<rect x="571.2" y="52.2" width="42.8" height="29.2" rx="1.6" ry="2.4" fill="#f3f4f6" stroke="#e2e5ea" stroke-width="0.8"/>
<text transform="translate(578.90,70.20) scale(0.5710,1)" font-size="13" fill="#3d4c65" >Send To</text>
<rect x="476.3" y="90.2" width="143.7" height="529.8" fill="#eff0f3"/>
<rect x="476" y="90.2" width="0.7" height="243" fill="#e3e5ea"/>
<rect x="476" y="376" width="0.7" height="244" fill="#e3e5ea"/>
<rect x="476.5" y="163" width="143.5" height="0.9" fill="#dfe2e8"/>
<path d="M504.9 104.6L522.6 102.6L523.0 135.1L504.9 132.7Z" fill="#ffffff" stroke="#1b84c6" stroke-width="1.3" stroke-linejoin="round"/><path d="M507.8 104.3L507.9 133.1M510.8 103.9L510.9 133.5M513.8 103.6L514.0 133.9M516.7 103.3L517.0 134.3M519.6 102.9L520.0 134.7M504.9 108.1L522.6 106.7M504.9 111.6L522.7 110.7M504.9 115.1L522.8 114.8M504.9 118.6L522.8 118.8M504.9 122.2L522.9 122.9M504.9 125.7L522.9 127.0M504.9 129.2L523.0 131.0" fill="none" stroke="#1b84c6" stroke-width="0.7"/><path d="M513.8 103.6L514.0 133.9M504.9 118.6L522.8 118.8" fill="none" stroke="#1b84c6" stroke-width="1.2"/>
<text transform="translate(498.10,152.00) scale(0.5822,1)" font-size="11.4" fill="#4a5870" >Workplane</text>
<path d="M573.2 104.2L577.6 105V126.4L590.6 128.6V134.2L573.2 131.6Z" fill="#ffffff" stroke="#1b84c6" stroke-width="1.3" stroke-linejoin="round"/>
<path d="M575.6 108.0H577.4M575.6 111.2H577.4M575.6 114.4H577.4M575.6 117.6H577.4M575.6 120.8H577.4M575.6 124.0H577.4M578.2 129.4V131.2M580.8 129.8V131.6M583.4 130.2V132.0M586.0 130.7V132.5M588.6 131.1V132.9" stroke="#1b84c6" stroke-width="0.7" fill="none"/>
<text transform="translate(573.65,152.00) scale(0.5984,1)" font-size="11.4" fill="#4a5870" >Ruler</text>
<rect x="479.2" y="170.6" width="137.8" height="57.9" rx="1.8" fill="#d5dae3" opacity="0.9"/>
<rect x="479" y="169.7" width="137.9" height="56.8" rx="1.5" ry="2" fill="#f4f5f8" stroke="#e4e7ec" stroke-width="0.7"/>
<text transform="translate(484.50,189.20) scale(0.5579,1)" font-size="10.5" fill="#586277" >Tinkercad</text>
<text transform="translate(484.50,211.50) scale(0.5607,1)" font-size="14" fill="#3d4d68" >Basic Shapes</text>
<path d="M602.6 196.3H608.4L605.5 201.8Z" fill="#111"/>
<rect x="479" y="237.4" width="138" height="383" fill="#f0f1f4" stroke="#e3e6eb" stroke-width="0.7"/>
<rect x="613.5" y="238.8" width="3.4" height="84.8" rx="1.7" fill="#b4b4b6"/>
<defs>
<pattern id="st1" width="9" height="9" patternUnits="userSpaceOnUse" patternTransform="matrix(1 0 0.58 1 0 0)"><rect width="9" height="9" fill="#d2d7e0"/><rect width="4.5" height="9" fill="#bac0cb"/></pattern>
<pattern id="st2" width="9" height="9" patternUnits="userSpaceOnUse" patternTransform="matrix(1 0 0.58 1 0 0)"><rect width="9" height="9" fill="#c3c9d4"/><rect width="4.5" height="9" fill="#adb4c1"/></pattern>
<pattern id="st3" width="9" height="9" patternUnits="userSpaceOnUse" patternTransform="matrix(1 0 0.58 1 0 0)"><rect width="9" height="9" fill="#b2b9c6"/><rect width="4.5" height="9" fill="#9fa7b5"/></pattern>
<linearGradient id="cylh" x1="0" y1="0" x2="1" y2="0"><stop offset="0" stop-color="#8d95a3" stop-opacity="0.55"/><stop offset="0.3" stop-color="#ffffff" stop-opacity="0"/><stop offset="0.75" stop-color="#ffffff" stop-opacity="0.12"/><stop offset="1" stop-color="#8d95a3" stop-opacity="0.45"/></linearGradient>
<linearGradient id="cylo" x1="0" y1="0" x2="1" y2="0"><stop offset="0" stop-color="#b85c0c"/><stop offset="0.2" stop-color="#cf6d14"/><stop offset="0.65" stop-color="#e07c1c"/><stop offset="1" stop-color="#cc6a12"/></linearGradient>
<radialGradient id="sph" cx="0.6" cy="0.35" r="0.7"><stop offset="0" stop-color="#20a6de"/><stop offset="0.6" stop-color="#1a97cf"/><stop offset="1" stop-color="#1479b2"/></radialGradient>
</defs>
<path d="M495.3 284.3L527.0 291.8L525.8 338.0L497.6 327.9Z" fill="url(#st2)" stroke="#5d626b" stroke-width="0.9" stroke-linejoin="round"/><path d="M527.0 291.8L533.7 268.5L530.8 313.0L525.8 338.0Z" fill="url(#st3)" stroke="#5d626b" stroke-width="0.9" stroke-linejoin="round"/><path d="M507.1 261.3L533.7 268.5L527.0 291.8L495.3 284.3Z" fill="url(#st1)" stroke="#5d626b" stroke-width="0.9" stroke-linejoin="round"/>
<text transform="translate(509.40,356.10) scale(0.5854,1)" font-size="11.5" fill="#4a5a78" >Box</text>
<path d="M565.3 277.2V321.8A15.25 12.8 0 0 0 595.8 321.8V277.2Z" fill="url(#st2)" stroke="#5d626b" stroke-width="0.9"/>
<path d="M565.3 277.2V321.8A15.25 12.8 0 0 0 595.8 321.8V277.2Z" fill="url(#cylh)"/>
<ellipse cx="580.5" cy="277.2" rx="15.2" ry="13" fill="url(#st1)" stroke="#5d626b" stroke-width="0.9"/>
<text transform="translate(567.45,356.10) scale(0.6188,1)" font-size="11.5" fill="#4a5a78" >Cylinder</text>
<path d="M495.3 425.8L527.0 433.3L525.8 479.5L497.6 469.4Z" fill="#ab1424" stroke="#8e1220" stroke-width="0.9" stroke-linejoin="round"/><path d="M527.0 433.3L533.7 410.0L530.8 454.5L525.8 479.5Z" fill="#b6162a" stroke="#8e1220" stroke-width="0.9" stroke-linejoin="round"/><path d="M507.1 402.8L533.7 410.0L527.0 433.3L495.3 425.8Z" fill="#c9182c" stroke="#8e1220" stroke-width="0.9" stroke-linejoin="round"/>
<text transform="translate(509.40,497.20) scale(0.5854,1)" font-size="11.5" fill="#4a5a78" >Box</text>
<path d="M565.3 418.2V463A15.25 12.8 0 0 0 595.8 463V418.2Z" fill="url(#cylo)" stroke="#a85408" stroke-width="0.7"/>
<ellipse cx="580.5" cy="418.2" rx="15.2" ry="13" fill="#e07f1e" stroke="#b45c0c" stroke-width="0.7"/>
<text transform="translate(567.45,497.20) scale(0.6188,1)" font-size="11.5" fill="#4a5a78" >Cylinder</text>
<ellipse cx="515.8" cy="583" rx="17" ry="28" fill="#d8dbe2" opacity="0.5"/>
<ellipse cx="515.4" cy="581.3" rx="14.6" ry="26" fill="url(#sph)" stroke="#1579b0" stroke-width="0.6"/>
<defs><path id="sq" d="M200 278L205 225Q212 203 233 203Q255 205 264 240L290 322Q302 346 317 344Q328 340 328 300L326 175Q329 150 350 150Q369 152 390 185L510 372Q528 392 545 386Q557 378 541 310L495 155Q493 122 512 121Q529 124 540 180M562 150L566 192"/></defs>
<g transform="translate(555,550) scale(0.06548,0.11291)" fill="none" stroke-linecap="round" stroke-linejoin="round" stroke-width="44"><g stroke="#7fa6c9"><use href="#sq" y="8"/><use href="#sq" y="16"/><use href="#sq" y="24"/><use href="#sq" y="32"/><use href="#sq" y="40"/><use href="#sq" y="48"/><use href="#sq" y="56"/><use href="#sq" y="64"/><use href="#sq" y="72"/><use href="#sq" y="80"/><use href="#sq" y="88"/><use href="#sq" y="96"/><use href="#sq" y="104"/><use href="#sq" y="112"/><use href="#sq" y="120"/><use href="#sq" y="128"/><use href="#sq" y="136"/><use href="#sq" y="144"/><use href="#sq" y="152"/><use href="#sq" y="160"/><use href="#sq" y="168"/><use href="#sq" y="176"/><use href="#sq" y="184"/><use href="#sq" y="192"/></g><use href="#sq" stroke="#a7cbea" stroke-width="36"/></g>
<path d="M470.9 333.3H478.8V376.1H470.9Z" fill="#f4f5f7"/>
<path d="M470.9 333.3H476.2M470.9 333.3V376.1M470.9 376.1H476.2" fill="none" stroke="#e3e5ea" stroke-width="0.5"/>
<path d="M473.4 345.4L476.9 355L473.7 364.6" fill="none" stroke="#111" stroke-width="1.1"/>
<!--EXTRA-->
</svg>
</body></html>
